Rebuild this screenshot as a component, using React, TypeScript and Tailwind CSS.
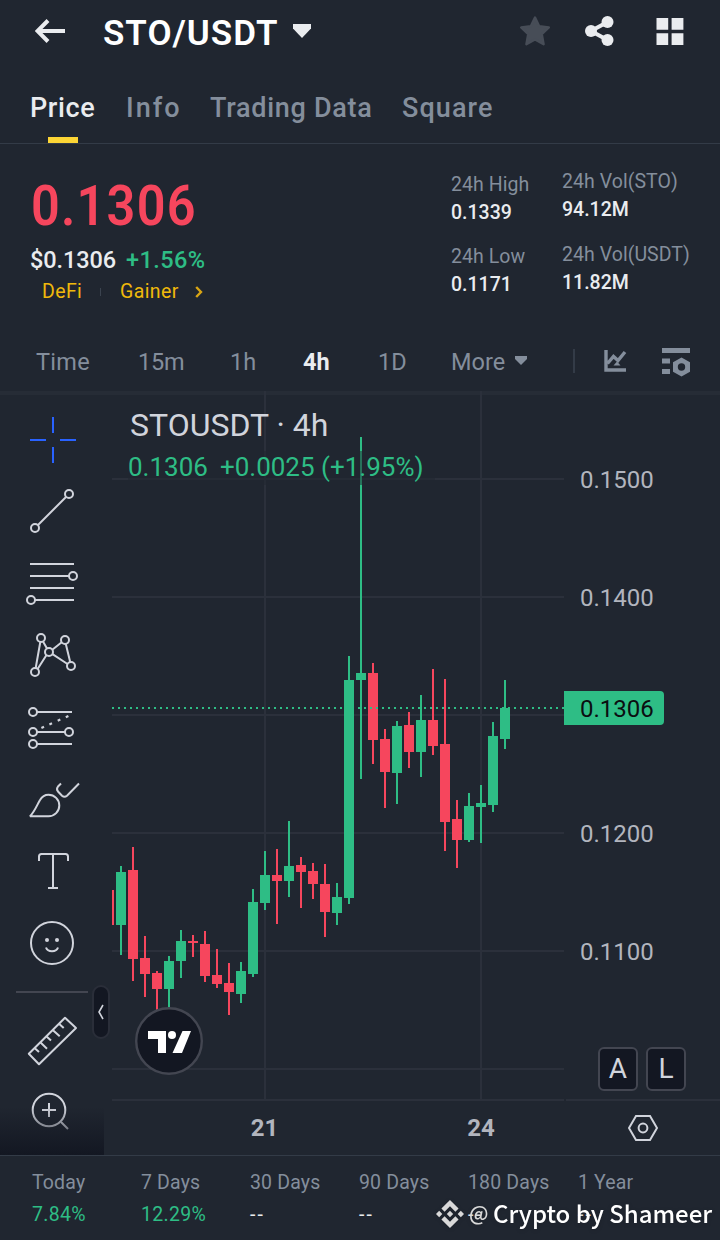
import type { ReactNode } from "react";
import { SiBinance } from "react-icons/si";

type Candle = {
	x: number;
	up: boolean;
	high: number;
	low: number;
	top: number;
	bottom: number;
};

// [up, high, low, body top, body bottom], one every 12px
const rawCandles: [number, number, number, number, number][] = [
	[1, 866, 955, 872, 925],
	[0, 847, 981, 870, 959],
	[0, 936, 997, 958, 974],
	[0, 971, 1010, 973, 989],
	[1, 956, 1010, 961, 989],
	[1, 930, 978, 941, 961],
	[0, 935, 957, 941, 943],
	[0, 931, 982, 944, 976],
	[0, 949, 988, 975, 984],
	[0, 963, 1015, 983, 992],
	[1, 962, 1003, 971, 994],
	[1, 889, 977, 902, 974],
	[1, 851, 910, 875, 903],
	[0, 849, 924, 875, 881],
	[1, 821, 897, 866, 881],
	[0, 857, 908, 865, 872],
	[0, 863, 899, 871, 884],
	[0, 864, 937, 884, 912],
	[1, 883, 925, 897, 913],
	[1, 656, 904, 680, 898],
	[1, 437, 779, 673, 680],
	[0, 663, 764, 673, 740],
	[0, 729, 808, 739, 772],
	[1, 721, 804, 726, 773],
	[0, 712, 768, 725, 752],
	[1, 695, 777, 720, 752],
	[0, 669, 755, 720, 746],
	[0, 679, 851, 744, 822],
	[0, 800, 868, 819, 840],
	[1, 793, 842, 806, 840],
	[1, 785, 843, 803, 807],
	[1, 722, 812, 736, 805],
	[1, 680, 749, 708, 739],
];

const candles: Candle[] = rawCandles.map(([up, high, low, top, bottom], i) => ({
	x: 121 + i * 12,
	up: up === 1,
	high,
	low,
	top,
	bottom,
}));

const tabs = [
	{ label: "Price", active: true, className: "w-[66px] tracking-[0.6px]" },
	{ label: "Info", className: "w-[54px] tracking-[2px]" },
	{ label: "Trading Data", className: "w-[162px] tracking-[0.7px]" },
	{ label: "Square", className: "w-[92px] tracking-[1.1px]" },
];

const performance = [
	{ label: "Today", value: "7.84%", up: true },
	{ label: "7 Days", value: "12.29%", up: true },
	{ label: "30 Days", value: "--" },
	{ label: "90 Days", value: "--" },
	{ label: "180 Days", value: "--" },
	{ label: "1 Year", value: "--" },
];

function Header() {
	return (
		<header className="flex h-16 items-center pr-9 pl-[35px] text-[#eaecef]">
			<svg className="mb-[2px]" width="30" height="24" viewBox="0 0 30 24">
				<path
					d="M13 1.5 2.5 12 13 22.5M3 12H30"
					fill="none"
					stroke="currentColor"
					strokeWidth="4"
				/>
			</svg>
			<h1 className="ml-[38px] w-[174px] pt-[2px] text-[35px] leading-none font-semibold tracking-[1px] whitespace-nowrap text-white">
				STO/USDT
			</h1>
			<svg className="mb-[2px] ml-4" width="18" height="14" viewBox="0 0 18 14">
				<path d="M0 0H18V4.5L9 14 0 4.5Z" fill="currentColor" />
			</svg>
			<div className="mb-[2px] ml-auto flex items-center">
				<svg width="30" height="30" viewBox="0 0 30 30">
					<path
						d="M15 1.5 19.2 10.2 28.8 11.5 21.8 18.2 23.6 28.2 15 23.5 6.4 28.2 8.2 18.2 1.2 11.5 10.8 10.2Z"
						fill="#474d57"
						stroke="#474d57"
						strokeWidth="2.4"
						strokeLinejoin="round"
					/>
				</svg>
				<svg className="ml-[35px]" width="29" height="30" viewBox="0 0 29 30">
					<path
						d="M22.5 6 6 15 22.5 24"
						fill="none"
						stroke="currentColor"
						strokeWidth="4"
					/>
					<circle cx="22.5" cy="6" r="6" fill="currentColor" />
					<circle cx="6" cy="15" r="6" fill="currentColor" />
					<circle cx="22.5" cy="24" r="6" fill="currentColor" />
				</svg>
				<svg className="ml-[42px]" width="28" height="27" viewBox="0 0 28 27">
					<path
						d="M0.5 0H12.2V11.8H0.5ZM15.6 0H27.4V11.8H15.6ZM0.5 15.2H12.2V27H0.5ZM15.6 15.2H27.4V27H15.6Z"
						fill="currentColor"
					/>
				</svg>
			</div>
		</header>
	);
}

function Tabs() {
	return (
		<nav className="flex h-20 gap-[30px] border-b border-[#333b47] pl-[30px]">
			{tabs.map((tab) => (
				<div
					key={tab.label}
					className={`relative pt-[25px] text-[27px] leading-[38px] font-medium whitespace-nowrap ${tab.className} ${
						tab.active ? "text-[#eaecef]" : "text-[#848e9c]"
					}`}
				>
					{tab.label}
					{tab.active && (
						<span className="absolute bottom-0 left-[18px] h-1.5 w-[30px] bg-[#fcd535]" />
					)}
				</div>
			))}
		</nav>
	);
}

function Stat({ label, value }: { label: string; value: string }) {
	return (
		<div className="text-[19.5px] leading-[28px] whitespace-nowrap">
			<div className="tracking-[0.05px] text-[#848e9c]">{label}</div>
			<div className="font-medium text-[#eaecef]">{value}</div>
		</div>
	);
}

function Summary() {
	return (
		<section className="flex h-[186px] pl-[30px]">
			<div className="w-[421px] pt-[27px]">
				<div className="origin-left scale-x-90 pl-px text-[56px] leading-[70px] font-semibold tracking-[1.4px] text-[#f6465d]">
					0.1306
				</div>
				<div className="flex h-10 items-center gap-[12px] text-[23.5px] font-medium">
					<span className="w-[84px] tracking-[-0.1px] text-[#eaecef]">
						$0.1306
					</span>
					<span className="tracking-[0.4px] text-[#2ebd85]">+1.56%</span>
				</div>
				<div className="flex h-[22px] items-center pl-3 text-[19.5px] text-[#f0b90b]">
					<span className="w-[58px] tracking-[0.4px]">DeFi</span>
					<span className="h-2 w-px bg-[#3b434f]" />
					<span className="ml-[19px] w-[75px] tracking-[0.4px]">Gainer</span>
					<svg width="8" height="12" viewBox="0 0 8 12">
						<path
							d="M1.2 1 6 6 1.2 11"
							fill="none"
							stroke="#d9a514"
							strokeWidth="2.4"
						/>
					</svg>
				</div>
			</div>
			<div className="flex w-[111px] flex-col gap-4 pt-[27px]">
				<Stat label="24h High" value="0.1339" />
				<Stat label="24h Low" value="0.1171" />
			</div>
			<div className="flex flex-col gap-[17px] pt-[24px]">
				<Stat label="24h Vol(STO)" value="94.12M" />
				<Stat label="24h Vol(USDT)" value="11.82M" />
			</div>
		</section>
	);
}

function Intervals() {
	return (
		<section className="grid h-[61px] grid-cols-[102px_92px_73px_75px_74px_63px_58px_31px_57px_28px] items-center pt-[5px] pl-9 text-[23.5px] whitespace-nowrap text-[#848e9c]">
			<span className="tracking-[0.3px]">Time</span>
			<span className="tracking-[-0.2px]">15m</span>
			<span>1h</span>
			<span className="font-bold text-[#eaecef]">4h</span>
			<span>1D</span>
			<span className="-ml-px">More</span>
			<svg className="mb-[5px]" width="12" height="9" viewBox="0 0 12 9">
				<path d="M0 0H12V3L6 9 0 3Z" fill="currentColor" />
			</svg>
			<span className="mb-[5px] h-6 w-0.5 bg-[#333b47]" />
			<svg className="mb-1" width="23" height="22" viewBox="0 0 23 22">
				<path
					d="M2 0V20H22M3.5 13.5 9.5 6.5 14 10.5 21 2"
					fill="none"
					stroke="currentColor"
					strokeWidth="3.4"
				/>
				<path d="M9.5 15.5 13 11.5 16.5 15.5Z" fill="currentColor" />
			</svg>
			<svg className="mb-px ml-px" width="28" height="29" viewBox="0 0 28 29">
				<path
					d="M0 0H28V5H0ZM0 10.5H8V15.5H0ZM0 21H8V26H0Z"
					fill="currentColor"
				/>
				<path
					d="M19.5 9.5 28 14.2V23.8L19.5 28.5 11 23.8V14.2ZM19.5 15.3A3.7 3.7 0 1 0 19.5 22.7 3.7 3.7 0 1 0 19.5 15.3Z"
					fill="currentColor"
					fillRule="evenodd"
				/>
			</svg>
		</section>
	);
}

function ToolIcon({ children }: { children: ReactNode }) {
	return (
		<svg
			className="size-[72px] shrink-0"
			viewBox="0 0 72 72"
			fill="none"
			stroke="#d1d4dc"
			strokeWidth="2"
		>
			{children}
		</svg>
	);
}

function Toolbar() {
	return (
		<aside className="relative flex w-[104px] flex-col pt-[9px] pl-4">
			<ToolIcon>
				<path d="M37 13V29M37 43V59M14 36H30M44 36H60" stroke="#2962ff" />
			</ToolIcon>
			<ToolIcon>
				<path d="M22 49 50 21" />
				<circle cx="53" cy="18" r="4" />
				<circle cx="19" cy="52" r="4" />
			</ToolIcon>
			<ToolIcon>
				<path d="M14 16H58M14 28H53M14 40H58M19 52H58" />
				<circle cx="57" cy="28" r="4" />
				<circle cx="15" cy="52" r="4" />
			</ToolIcon>
			<ToolIcon>
				<path d="M19.7 48 24.3 22M27 21.5 31 28.5M36.3 29.7 45.7 22.3M49.8 24 54.2 42M51.5 44 36.5 34.2M21.6 49 30.5 35" />
				<circle cx="25" cy="18" r="4" />
				<circle cx="33" cy="32" r="4" />
				<circle cx="49" cy="20" r="4" />
				<circle cx="55" cy="46" r="4" />
				<circle cx="19" cy="52" r="4" />
			</ToolIcon>
			<ToolIcon>
				<path d="M21 20H56M21 40H49M21 52H56" />
				<circle cx="17" cy="20" r="4" />
				<circle cx="17" cy="40" r="4" />
				<circle cx="53" cy="40" r="4" />
				<circle cx="17" cy="52" r="4" />
				<path
					d="M25.4 36 28 34.8M33.4 32.4 36 31.2M41.7 28.8 44.3 27.6M49.8 25.2 52.4 24"
					strokeWidth="2.2"
				/>
			</ToolIcon>
			<ToolIcon>
				<path
					d="M14 52.3C19 47 21 41 24 36 26 32.5 29 30.7 32.5 30.7A10.6 10.6 0 0 1 32.5 52.3Z"
					strokeLinejoin="bevel"
				/>
				<path d="M45 19.5 42 22.5Q40 25 42 27.5L46 31.7Q48.5 33.7 51 31.7L63 19.5" />
			</ToolIcon>
			<ToolIcon>
				<path d="M23 25V20.5Q23 18 25.5 18H49.5Q52 18 52 20.5V25M37 18V52M32 52H42" />
			</ToolIcon>
			<ToolIcon>
				<circle cx="36" cy="35" r="21" />
				<circle cx="31" cy="32" r="2" fill="#d1d4dc" stroke="none" />
				<circle cx="41" cy="32" r="2" fill="#d1d4dc" stroke="none" />
				<path d="M30 39.5A6.2 5 0 0 0 42 39.5" />
			</ToolIcon>
			<div className="mt-[11px] h-0.5 w-[72px] shrink-0 bg-[#434651]" />
			<div className="mt-3 flex flex-col">
				<ToolIcon>
					<path
						d="M12.8 48.7 49 12.8 60 23 23 59.3Z"
						strokeLinejoin="round"
					/>
					<path d="M18.5 43 23 47M24.3 37.3 31 43.7M30.3 31.3 35 35.5M36.7 25 43.7 31.3M43 18.7 47.7 23" />
				</ToolIcon>
				<ToolIcon>
					<circle cx="33" cy="33" r="16.3" />
					<path d="M33 26V40M26 33H40M45 45 52 52" />
				</ToolIcon>
			</div>
			{/* fade over the last tool */}
			<div className="absolute bottom-0 left-0 h-12 w-full bg-linear-to-b from-[#131722]/0 to-[#131722]" />
			{/* collapse handle */}
			<div className="absolute top-[590px] left-[92px] z-10 flex h-[54px] w-[18px] items-center justify-center rounded-[9px] border-2 border-[#2a2e39] bg-[#131722]">
				<svg width="6" height="16" viewBox="0 0 6 16">
					<path
						d="M5 1 1 8 5 15"
						fill="none"
						stroke="#d1d4dc"
						strokeWidth="1.6"
					/>
				</svg>
			</div>
		</aside>
	);
}

function Plot() {
	return (
		<svg
			className="-mt-1 h-[708px] w-[452px] shrink-0"
			viewBox="112 391 452 708"
			shapeRendering="crispEdges"
		>
			<g fill="#2b303b">
				{[479, 597, 715, 833, 951, 1069].map((y) => (
					<rect key={y} x="112" y={y - 1} width="452" height="2" />
				))}
				<rect x="264" y="391" width="2" height="708" />
				<rect x="480" y="391" width="2" height="708" />
			</g>
			<rect x="112" y="890" width="2" height="35" fill="#f6465d" />
			{candles.map((c) => (
				<g key={c.x} fill={c.up ? "#2ebd85" : "#f6465d"}>
					<rect x={c.x - 1} y={c.high} width="2" height={c.low - c.high} />
					<rect x={c.x - 5} y={c.top} width="10" height={c.bottom - c.top} />
				</g>
			))}
			<path
				d="M112 708H564"
				stroke="#2ebd85"
				strokeWidth="2"
				strokeDasharray="2 4"
			/>
		</svg>
	);
}

function PriceLabel({ children }: { children: ReactNode }) {
	return <div className="flex h-[118px] items-center pl-4">{children}</div>;
}

function PriceAxis() {
	return (
		<div className="flex-1 pt-[26px] text-2xl text-[#b2b5be]">
			<PriceLabel>0.1500</PriceLabel>
			<PriceLabel>0.1400</PriceLabel>
			<div className="flex h-[118px] pt-[34px]">
				<div className="flex h-[34px] w-[100px] items-center rounded-r bg-[#2ebd85] pt-px pl-4 text-[#0b0e11]">
					0.1306
				</div>
			</div>
			<PriceLabel>0.1200</PriceLabel>
			<PriceLabel>0.1100</PriceLabel>
			<div className="mt-9 ml-[34px] flex gap-2 text-[28px] text-[#d1d4dc]">
				{["A", "L"].map((key) => (
					<div
						key={key}
						className="flex h-11 w-10 items-center justify-center rounded-md border-2 border-[#434651] bg-[#131722]"
					>
						{key}
					</div>
				))}
			</div>
		</div>
	);
}

function Chart() {
	return (
		<section className="relative flex h-[764px] border-t-4 border-[#262c36]">
			<Toolbar />
			<div className="flex flex-1 flex-col pl-2">
				<div className="flex h-[704px]">
					<Plot />
					<PriceAxis />
				</div>
				<div className="flex h-0.5 gap-0.5">
					<div className="w-[452px] bg-[#2b303b]" />
					<div className="flex-1 bg-[#2b303b]" />
				</div>
				<div className="grid h-[54px] grid-cols-[305px_128px_175px] items-center text-center text-2xl font-bold text-[#b2b5be]">
					<span>21</span>
					<span>24</span>
					<svg className="ml-[83px]" width="30" height="26" viewBox="0 0 30 26">
						<path
							d="M8 1H22L29 13 22 25H8L1 13Z"
							fill="none"
							stroke="#d1d4dc"
							strokeWidth="2"
						/>
						<circle
							cx="15"
							cy="13"
							r="4.4"
							fill="none"
							stroke="#d1d4dc"
							strokeWidth="2"
						/>
					</svg>
				</div>
			</div>

			{/* Legend */}
			<div className="absolute top-[13px] left-[128px] whitespace-nowrap">
				<div className="pl-[2px] text-[32px] leading-[34px] text-[#d1d4dc]">
					STOUSDT · 4h
				</div>
				<div className="mt-[9px] flex h-[34px] w-[307px] items-center gap-3 bg-[#202630]/50 pb-[2px] text-[26px] text-[#2ebd85]">
					<span>0.1306</span>
					<span>+0.0025 (+1.95%)</span>
				</div>
			</div>

			{/* Logo badge */}
			<svg
				className="absolute top-[612px] left-[135px]"
				width="68"
				height="68"
				viewBox="0 0 68 68"
			>
				<circle
					cx="34"
					cy="34"
					r="32.8"
					fill="#131722"
					stroke="#434651"
					strokeWidth="2.4"
				/>
				<path
					d="M13 24H31V46H23V32H13ZM47.5 24H56L47 46H37.5Z"
					fill="#fff"
				/>
				<circle cx="37" cy="28" r="4" fill="#fff" />
			</svg>
		</section>
	);
}

function Performance() {
	return (
		<footer className="relative grid h-[85px] grid-cols-[109px_109px_109px_109px_110px_100px] border-t border-[#333b47] pt-[11px] pl-8 text-[19.5px] leading-8 whitespace-nowrap">
			{performance.map((item) => (
				<div key={item.label}>
					<div className="tracking-[0.15px] text-[#848e9c]">{item.label}</div>
					<div
						className={
							item.up
								? "tracking-[0.3px] text-[#2ebd85]"
								: "tracking-[2px] text-[#eaecef]"
						}
					>
						{item.value}
					</div>
				</div>
			))}
			<div className="absolute top-[42px] left-[436px] flex h-8 items-center [font-family:'Noto_Sans_CJK_SC',sans-serif] text-[24px] font-medium text-white drop-shadow-sm">
				<SiBinance className="size-7 text-[#d9d9d9]" />
				<span className="mb-[3px] ml-[5px] w-[24px] text-[20px] text-[#d9d9d9]">
					@
				</span>
				<span className="mb-[3px]">Crypto by Shameer</span>
			</div>
		</footer>
	);
}

export default function App() {
	return (
		<main className="h-[1240px] w-[720px] overflow-hidden bg-[#202630] font-[Roboto,sans-serif]">
			<Header />
			<Tabs />
			<Summary />
			<Intervals />
			<Chart />
			<Performance />
		</main>
	);
}
